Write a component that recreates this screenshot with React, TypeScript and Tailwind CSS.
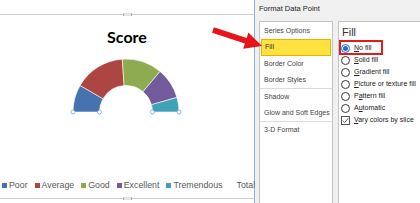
import React from "react";

type Slice = { name: string; color: string; from: number; to: number };

const slices: Slice[] = [
  { name: "Poor", color: "#4673ad", from: 180, to: 150 },
  { name: "Average", color: "#ad4542", from: 150, to: 94 },
  { name: "Good", color: "#8fab4f", from: 94, to: 50 },
  { name: "Excellent", color: "#735a9b", from: 50, to: 16 },
  { name: "Tremendous", color: "#41a1b7", from: 16, to: 0 },
];

const CX = 56;
const CY = 55;
const R = 53;
const r = 26.5;

function pt(angle: number, rad: number) {
  const a = (angle * Math.PI) / 180;
  return `${(CX + rad * Math.cos(a)).toFixed(2)} ${(CY - rad * Math.sin(a)).toFixed(2)}`;
}

function arcPath(a1: number, a2: number) {
  return `M ${pt(a1, R)} A ${R} ${R} 0 0 1 ${pt(a2, R)} L ${pt(a2, r)} A ${r} ${r} 0 0 0 ${pt(a1, r)} Z`;
}

function Donut() {
  return (
    <svg width="112" height="59" viewBox="0 0 112 59">
      {slices.map((s) => (
        <path key={s.name} d={arcPath(s.from, s.to)} fill={s.color} stroke="#ffffff" strokeWidth="0.6" />
      ))}
      {[CX - R, CX - r, CX + r, CX + R].map((x) => (
        <circle key={x} cx={x} cy={CY} r="2" fill="#ffffff" stroke="#7aa7d6" strokeWidth="0.8" />
      ))}
    </svg>
  );
}

const navGroups = [
  ["Series Options", "Fill", "Border Color", "Border Styles"],
  ["Shadow", "Glow and Soft Edges"],
  ["3-D Format"],
];

type Option = { pre: string; key: string; post: string; checked?: boolean; box?: boolean };

const options: Option[] = [
  { pre: "", key: "N", post: "o fill", checked: true },
  { pre: "", key: "S", post: "olid fill" },
  { pre: "", key: "G", post: "radient fill" },
  { pre: "", key: "P", post: "icture or texture fill" },
  { pre: "P", key: "a", post: "ttern fill" },
  { pre: "A", key: "u", post: "tomatic" },
  { pre: "", key: "V", post: "ary colors by slice", checked: true, box: true },
];

function Radio({ checked }: { checked?: boolean }) {
  return (
    <span
      className={`flex h-[9px] w-[9px] items-center justify-center rounded-full border bg-white ${
        checked ? "border-[#1e6fd9]" : "border-[#3a3a3a]"
      }`}
    >
      {checked && <span className="h-[5px] w-[5px] rounded-full bg-[#1e6fd9]" />}
    </span>
  );
}

function Checkbox() {
  return (
    <span className="flex h-[9px] w-[9px] items-center justify-center border border-[#555] bg-white">
      <svg width="7" height="7" viewBox="0 0 7 7">
        <path d="M0.8 3.6 L2.7 5.5 L6.3 1.2" fill="none" stroke="#555" strokeWidth="1" />
      </svg>
    </span>
  );
}

export default function App() {
  return (
    <div className="relative flex h-[203px] w-[420px] overflow-hidden bg-white" style={{ fontFamily: '"Liberation Sans", Arial, sans-serif' }}>
      {/* Chart area */}
      <div className="relative w-[254px] shrink-0 pt-[14px]">
        <div className="flex h-[185px] flex-col items-center border-y border-[#cfcfcf]">
          <div className="mt-[12px] h-[20px] text-[16px] leading-[20px] font-bold text-black" style={{ fontFamily: "Lato, sans-serif" }}>
            Score
          </div>
          <div className="mt-[10px] -ml-[2px]">
            <Donut />
          </div>
          <div className="mt-[63px] flex h-[12px] items-center gap-[7px] self-start pl-[2px] text-[8.8px] leading-[12px] text-[#595959]">
            {slices.map((s) => (
              <div key={s.name} className="flex items-center gap-[2px]">
                <span className="h-[5px] w-[5px]" style={{ backgroundColor: s.color }} />
                <span>{s.name}</span>
              </div>
            ))}
            <div className="flex items-center gap-[2px]">
              <span className="h-[5px] w-[5px]" />
              <span>Total</span>
            </div>
          </div>
        </div>
        {/* frame grips */}
        <span className="absolute top-[13px] left-[123px] h-[3px] w-[9px] border-x border-[#b0b0b0] bg-[#e4e4e4]" />
        <span className="absolute top-[197px] left-[123px] h-[3px] w-[9px] border-x border-[#b0b0b0] bg-[#e4e4e4]" />
      </div>

      {/* Dialog */}
      <div className="flex flex-1 flex-col border-l border-[#8db2d8] bg-[#f0f0f0] pl-[4px] text-[7px] text-[#333]">
        <div className="flex h-[17px] items-center text-[7.5px] text-[#222]">Format Data Point</div>
        <div className="mt-[4px] flex flex-1 gap-[5px]">
          <div className="w-[74px] border border-b-0 border-[#c4c4c4] bg-white pt-[1px]">
            {navGroups.map((group, gi) => (
              <div key={gi} className={gi > 0 ? "border-t border-[#dcdcdc]" : ""}>
                {group.map((item) =>
                  item === "Fill" ? (
                    <div
                      key={item}
                      className="mx-[1px] flex h-[17px] items-center border border-[#e3b400] bg-[#ffe23f] pl-[3px] text-[#333]"
                    >
                      {item}
                    </div>
                  ) : (
                    <div key={item} className="flex h-4 items-center pl-[4px] text-[#444]">
                      {item}
                    </div>
                  )
                )}
              </div>
            ))}
          </div>
          <div className="flex-1 border-t border-l border-[#c4c4c4] bg-white pt-[3px]">
            <div className="flex h-[15px] items-center pl-[3px] text-[11px] text-[#333]">Fill</div>
            <div className="mt-[2px] flex flex-col">
              {options.map((o, i) => (
                <div key={i} className="relative flex h-[12px] items-center gap-[4px] pl-[2px] text-[#222]">
                  {o.box ? <Checkbox /> : <Radio checked={o.checked} />}
                  <span>
                    {o.pre}
                    <span className="underline">{o.key}</span>
                    {o.post}
                  </span>
                  {i === 0 && <span className="absolute -top-[2px] left-0 h-[15px] w-[44px] border-2 border-[#e51a1a]" />}
                </div>
              ))}
            </div>
          </div>
        </div>
      </div>

      {/* Red pointer arrow */}
      <svg className="absolute top-[20px] left-[205px]" width="60" height="35" viewBox="205 20 60 35">
        <polygon
          points="213.9,27.3 246.7,38.0 248.4,32.6 262,46 243.2,48.8 244.9,43.4 212.1,32.7"
          fill="#e8141b"
        />
      </svg>
    </div>
  );
}
